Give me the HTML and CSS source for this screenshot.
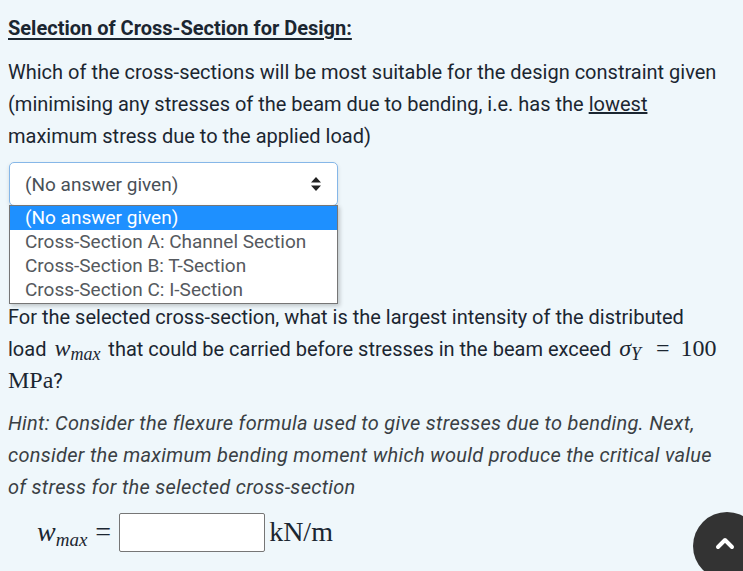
FILE: index.html
```html
<!DOCTYPE html>
<html>
<head>
<meta charset="utf-8">
<link rel="stylesheet" href="styles.css">
</head>
<body>
<div class="page">
  <h3 class="title">Selection of Cross-Section for Design:</h3>
  <p class="text">Which of the cross-sections will be most suitable for the design constraint given (minimising any stresses of the beam due to bending, i.e. has the <u>lowest</u> maximum stress due to the applied load)</p>

  <div class="select-wrap">
    <div class="select">
      <span>(No answer given)</span>
      <svg class="arrows" width="10" height="14" viewBox="0 0 10 14"><path d="M5 0 L10 5.5 L0 5.5 Z M5 14 L10 8.5 L0 8.5 Z" fill="#222"/></svg>
    </div>
    <ul class="list">
      <li class="sel">(No answer given)</li>
      <li>Cross-Section A: Channel Section</li>
      <li>Cross-Section B: T-Section</li>
      <li>Cross-Section C: I-Section</li>
    </ul>
  </div>

  <p class="text para2">For the selected cross-section, what is the largest intensity of the distributed load <span class="m inl"><i>w</i><sub><i>max</i></sub></span> that could be carried before stresses in the beam exceed <span class="m inl"><i>σ</i><sub><i>Y</i></sub><span class="eq">=</span>100</span> <span class="m">MPa</span>?</p>

  <p class="text hint"><i>Hint: Consider the flexure formula used to give stresses due to bending. Next, consider the maximum bending moment which would produce the critical value of stress for the selected cross-section</i></p>

  <div class="answer">
    <span class="m big"><i>w</i><sub><i>max</i></sub></span>
    <span class="m big eq2">=</span>
    <input class="inp" type="text">
    <span class="m big unit">kN/m</span>
  </div>
</div>
<div class="top-btn">
  <svg width="20" height="14" viewBox="0 0 20 14"><path d="M3 11 L10 4 L17 11" fill="none" stroke="#fff" stroke-width="4" stroke-linecap="round" stroke-linejoin="round"/></svg>
</div>
</body>
</html>
```

FILE: styles.css
```css
html, body {
  margin: 0;
  padding: 0;
  background: #eff7fb;
}
body {
  font-family: Roboto, "Noto Sans", sans-serif;
  color: #1b2631;
  font-size: 20px;
  overflow: hidden;
  height: 571px;
}
.page {
  padding: 0 22px 0 8px;
}
.title {
  margin: 0;
  padding-top: 15px;
  font-size: 20px;
  line-height: 26px;
  font-weight: 700;
  text-decoration: underline;
  text-underline-offset: 3px;
}
.text {
  margin: 0;
  line-height: 32px;
}
.title + .text {
  margin-top: 15px;
}
.select-wrap {
  position: relative;
  margin-top: 10px;
  width: 330px;
  margin-left: 1px;
}
.select {
  box-sizing: border-box;
  width: 329px;
  height: 44px;
  background: #fff;
  border: 1px solid #86b7e8;
  border-radius: 5px;
  display: flex;
  align-items: center;
  justify-content: space-between;
  padding: 0 16px 0 15px;
  color: #495057;
  font-size: 19px;
  box-shadow: 0 2px 4px rgba(0,0,0,0.12);
}
.arrows {
  display: block;
}
.list {
  position: absolute;
  top: 43px;
  left: 0;
  width: 329px;
  box-sizing: border-box;
  margin: 0;
  padding: 0 0 1px 0;
  list-style: none;
  background: #fff;
  border: 1px solid #767676;
  box-shadow: 2px 2px 4px rgba(0,0,0,0.2);
  color: #55595e;
  font-size: 19px;
}
.list li {
  height: 24px;
  line-height: 24px;
  padding-left: 15px;
}
.list li.sel {
  background: #1e90ff;
  color: #fff;
}
.para2 {
  margin-top: 95px;
}
.m {
  font-family: "Liberation Serif", "DejaVu Serif", serif;
  font-size: 24px;
  line-height: 1;
}
.m sub {
  font-size: 18px;
  vertical-align: -4px;
  line-height: 0;
}
.m.inl {
  margin: 0 3px;
}
.eq {
  margin: 0 11px 0 15px;
}
.hint {
  margin-top: 10px;
  color: #3a3f44;
  letter-spacing: 0.28px;
}
.answer {
  display: flex;
  align-items: center;
  margin-top: 0;
  padding-left: 29px;
  height: 58px;
}
.m.big {
  font-size: 28px;
}
.m.big sub {
  font-size: 19px;
  vertical-align: -5px;
}
.eq2 {
  margin: 0 8px 0 8px;
}
.inp {
  box-sizing: border-box;
  width: 146px;
  height: 39px;
  border: 1px solid #767676;
  border-radius: 2px;
  background: #fff;
  margin: 0 4px 0 0;
  padding: 0;
}
.top-btn {
  position: fixed;
  left: 693px;
  top: 512px;
  width: 68px;
  height: 68px;
  border-radius: 50%;
  background: #333;
  display: flex;
  align-items: center;
  justify-content: center;
  padding-right: 4px;
  padding-bottom: 6px;
  box-sizing: border-box;
}
```
